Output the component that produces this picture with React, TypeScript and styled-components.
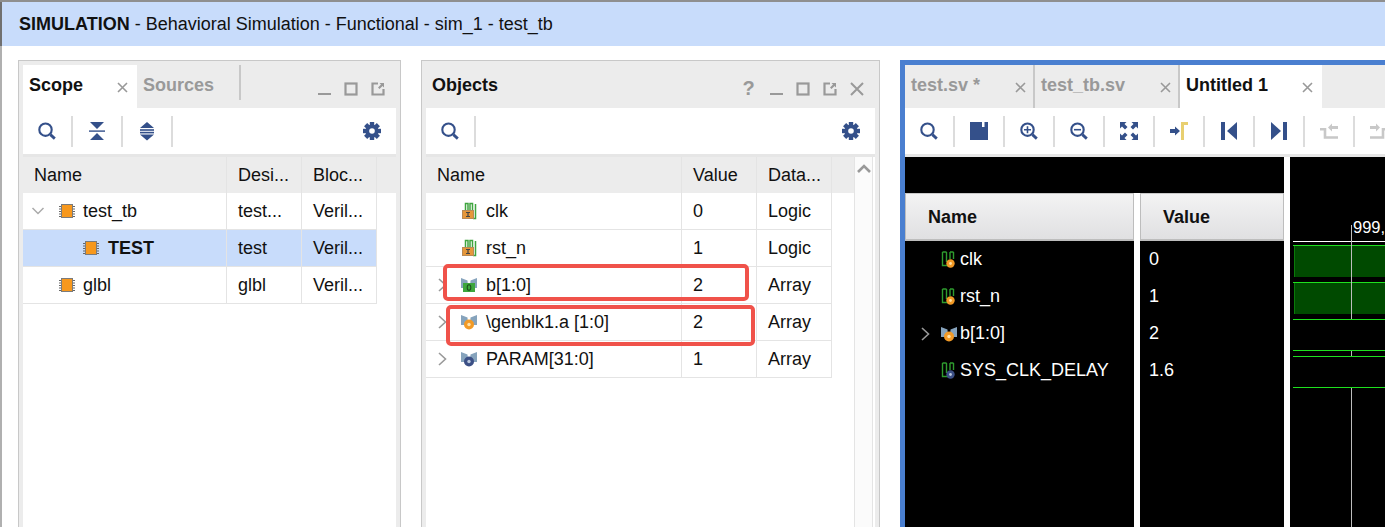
import React from "react";
import styled, { createGlobalStyle } from "styled-components";

const Global = createGlobalStyle`
  html, body { margin: 0; padding: 0; background: #fff; }
  body { font-family: "Liberation Sans", Arial, sans-serif; color: #111; }
`;

const BLUE = "#34508a";

const Page = styled.div`
  width: 1385px; height: 527px; overflow: hidden;
  display: flex; flex-direction: column;
  border-top: 2px solid #8f8f8f; box-sizing: border-box;
  background: #fff;
`;
const Banner = styled.div`
  height: 44px; flex: none; box-sizing: border-box;
  background: #c8dcfb; border-left: 2px solid #707070;
  padding-left: 17px; display: flex; align-items: center;
  font-size: 18px; white-space: pre;
  strong { font-weight: 700; }
`;
const Workspace = styled.div`
  flex: 1; min-height: 0; display: flex; gap: 20px;
  border-left: 2px solid #b0b0b0;
  padding: 14px 0 0 16px;
`;
const Panel = styled.section<{ $w: number }>`
  position: relative; flex: none; width: ${p => p.$w}px; box-sizing: border-box;
  border: 1px solid #c8c8c8; border-bottom: 0;
  background: #ececec; padding: 4px 4px 0;
  display: flex; flex-direction: column; overflow: hidden;
`;
const EditorPanel = styled.section`
  flex: 1; min-width: 0; border-top: 5px solid #4a7fd0; border-left: 5px solid #4a7fd0;
  background: #ececec; display: flex; flex-direction: column; overflow: hidden;
`;
const TabBar = styled.div`
  height: 43px; flex: none; display: flex; align-items: stretch; background: #ececec;
`;
const Tab = styled.div<{ $w: number; $active?: boolean; $sep?: boolean }>`
  width: ${p => p.$w}px; flex: none; box-sizing: border-box;
  display: flex; align-items: center; justify-content: space-between;
  padding: 0 ${p => (p.$sep ? 7 : 9)}px 3px 6px;
  background: ${p => (p.$active ? "#fff" : "transparent")};
  color: ${p => (p.$active ? "#111" : "#999")};
  font-weight: 700; font-size: 18px;
  border-right: ${p => (p.$sep ? "2px solid #c8c8c8" : "0")};
`;
const TabClose = styled.span`
  display: block; margin-top: 4px;
`;
const SourcesTab = styled(Tab)`
  height: 35px; padding: 5px 0 0 6px; border-right: 2px solid #c8c8c8;
`;
const PanelTitle = styled.div`
  font-weight: 700; font-size: 18px; padding: 0 0 3px 6px; align-self: center; color: #111;
`;
const WinButtons = styled.div`
  margin-left: auto; display: flex; padding: 4px 5px 0 0; height: 39px; align-items: center;
`;
const WinButton = styled.div`
  width: 27px; height: 20px; display: flex; align-items: center; justify-content: center;
  color: #999; font-weight: 700; font-size: 20px;
`;
const Toolbar = styled.div`
  height: 46px; flex: none; background: #fff; display: flex; align-items: center;
`;
const ToolButton = styled.div<{ $end?: boolean }>`
  width: 48px; height: 32px; flex: none; display: flex; align-items: center; justify-content: center;
  margin-left: ${p => (p.$end ? "auto" : "0")};
`;
const ToolSep = styled.div`
  width: 2px; height: 31px; flex: none; background: #dcdcdc;
`;
const Strip = styled.div`
  height: 3px; flex: none; background: #e6e6e6;
`;
const Content = styled.div`
  flex: 1; min-height: 0; background: #fff; display: flex;
`;
const TableArea = styled.div`
  flex: 1; min-width: 0;
`;
const HeadRow = styled.div`
  height: 36px; background: #ececec; display: flex; font-size: 18px;
`;
const Row = styled.div<{ $selected?: boolean }>`
  height: 37px; display: flex; font-size: 18px; width: max-content;
  background: ${p => (p.$selected ? "#c8dcfb" : "#fff")};
  box-sizing: border-box; border-bottom: 1px solid #e4e4e4;
`;
const Cell = styled.div<{ $w: number; $pad?: number }>`
  width: ${p => p.$w}px; flex: none; box-sizing: border-box;
  padding-left: ${p => p.$pad ?? 11}px;
  display: flex; align-items: center;
  border-right: 1px solid #e4e4e4; white-space: nowrap; overflow: hidden;
`;
const TreeSlot = styled.div<{ $x: number }>`
  width: ${p => p.$x}px; flex: none; display: flex; align-items: center;
`;
const Label = styled.span<{ $bold?: boolean; $gap?: number }>`
  font-weight: ${p => (p.$bold ? 700 : 400)}; margin-left: ${p => p.$gap ?? (p.$bold ? 9 : 8)}px;
`;
const Scroll = styled.div`
  width: 19px; flex: none; margin-right: 2px; box-sizing: border-box;
  border-left: 1px solid #e4e4e4; border-right: 1px solid #e4e4e4;
  background: #fbfbfb; display: flex; justify-content: center; padding-top: 4px; height: 400px;
`;
const Callout = styled.div<{ $top: number; $left: number; $w: number; $h: number }>`
  position: absolute; box-sizing: border-box;
  top: ${p => p.$top}px; left: ${p => p.$left}px; width: ${p => p.$w}px; height: ${p => p.$h}px;
  border: 4px solid #f0524a; border-radius: 5px;
`;

/* Waveform viewer */
const Viewer = styled.div`
  flex: 1; min-height: 0; display: flex; gap: 6px; background: #fff;
`;
const SignalPane = styled.div`
  width: 379px; flex: none; display: flex; flex-direction: column;
`;
const BlackBar = styled.div`
  height: 36px; flex: none; background: #000;
`;
const SignalCols = styled.div`
  flex: 1; display: flex; gap: 6px; min-height: 0;
`;
const SignalCol = styled.div<{ $w: number }>`
  width: ${p => p.$w}px; flex: none; background: #000; color: #fff;
`;
const SignalHead = styled.div<{ $pad: number }>`
  height: 48px; box-sizing: border-box; color: #111; font-weight: 700; font-size: 18px;
  background: linear-gradient(#f3f3f3, #e0e0e2);
  border: 1px solid #bdbdbd; border-top-color: #c8c8c8; border-bottom-width: 2px;
  display: flex; align-items: center; padding: 1px 0 0 ${p => p.$pad}px;
`;
const SignalRow = styled.div`
  height: 37px; display: flex; align-items: center; font-size: 18px; white-space: nowrap;
`;
const ValueRow = styled(SignalRow)`
  padding-left: 9px;
`;
const WavePane = styled.div`
  flex: 1; min-width: 0; background: #000;
`;
const Drawing = styled.svg`
  display: block; flex: none;
`;

const S = (p: React.PropsWithChildren<{ size?: number }>) => (
  <Drawing width={p.size ?? 20} height={p.size ?? 20} viewBox={`0 0 ${p.size ?? 20} ${p.size ?? 20}`}>
    {p.children}
  </Drawing>
);

const Lens = ({ children }: React.PropsWithChildren) => (
  <S>
    <circle cx="8.5" cy="8.7" r="6.2" fill="none" stroke={BLUE} strokeWidth="2.1" />
    <path d="M13.4 13.6L17.8 17.6" stroke={BLUE} strokeWidth="2.8" />
    {children}
  </S>
);
const SearchIcon = () => <Lens />;
const ZoomInIcon = () => (
  <Lens>
    <path d="M8.5 5.2V12.2M5 8.7H12" stroke={BLUE} strokeWidth="1.6" />
  </Lens>
);
const ZoomOutIcon = () => (
  <Lens>
    <path d="M5 8.7H12" stroke={BLUE} strokeWidth="1.6" />
  </Lens>
);
const CollapseIcon = () => (
  <S>
    <path d="M3 1H17L10 8Z M3 19H17L10 12Z" fill={BLUE} />
    <rect x="2" y="9.4" width="16" height="1.4" fill={BLUE} />
  </S>
);
const ExpandIcon = () => (
  <S>
    <path d="M10 1L17 7H3Z M3 13.5H17L10 19.5Z" fill={BLUE} />
    <rect x="3" y="8.2" width="14" height="1.6" fill={BLUE} />
    <rect x="3" y="10.8" width="14" height="1.6" fill={BLUE} />
  </S>
);
const GearIcon = () => (
  <S>
    <g fill={BLUE}>
      {[0, 45, 90, 135, 180, 225, 270, 315].map(a => (
        <rect key={a} x="7.8" y="1" width="4.4" height="5" transform={`rotate(${a} 10 10)`} />
      ))}
      <circle cx="10" cy="10" r="6.6" />
    </g>
    <circle cx="10" cy="10" r="2.8" fill="#fff" />
  </S>
);
const SaveIcon = () => (
  <S>
    <path fillRule="evenodd" d="M1 1H19V19H1Z M13 1V6H15.5V1Z" fill={BLUE} />
  </S>
);
const FitIcon = () => (
  <S>
    <g fill={BLUE}>
      {[0, 90, 180, 270].map(a => (
        <path key={a} d="M1 1H7.5L5.5 3L8.5 6L6 8.5L3 5.5L1 7.5Z" transform={`rotate(${a} 10 10)`} />
      ))}
    </g>
  </S>
);
const MarkerIcon = () => (
  <S>
    <path d="M1 8H6V5.5L11 10L6 14.5V12H1Z" fill={BLUE} />
    <path d="M12 1H19V4H15V19H12Z" fill="#e8cf70" />
  </S>
);
const PrevIcon = () => (
  <S>
    <rect x="2" y="1" width="4" height="18" fill={BLUE} />
    <path d="M18 1V19L8 10Z" fill={BLUE} />
  </S>
);
const NextIcon = () => (
  <S>
    <rect x="14" y="1" width="4" height="18" fill={BLUE} />
    <path d="M2 1V19L12 10Z" fill={BLUE} />
  </S>
);
const StepBackIcon = () => (
  <S>
    <path d="M1 8.2H6V16.5H19" fill="none" stroke="#c8c8c8" strokeWidth="2.6" />
    <path d="M19 5H13V2.5L9 6.5L13 10.5V8H19Z" fill="#c8c8c8" />
  </S>
);
const StepFwdIcon = () => (
  <S>
    <path d="M1 16.5H14V8.2H19" fill="none" stroke="#c8c8c8" strokeWidth="2.6" />
    <path d="M1 5H7V2.5L11 6.5L7 10.5V8H1Z" fill="#c8c8c8" />
  </S>
);
const CloseIcon = ({ size = 11, w = 1.6 }: { size?: number; w?: number }) => (
  <S size={size}>
    <path d={`M1 1L${size - 1} ${size - 1}M${size - 1} 1L1 ${size - 1}`} stroke="#999" strokeWidth={w} />
  </S>
);
const MinIcon = () => (
  <S size={14}>
    <rect x="1" y="11" width="13" height="2" fill="#999" />
  </S>
);
const MaxIcon = () => (
  <S size={14}>
    <rect x="1.5" y="1.5" width="11" height="11" fill="none" stroke="#999" strokeWidth="2.2" />
  </S>
);
const FloatIcon = () => (
  <S size={14}>
    <path d="M7 1.5H1.5V12.5H12.5V7" fill="none" stroke="#999" strokeWidth="2.2" />
    <path d="M8.5 1H13V5.5L11.5 4L8.5 7L7 5.5L10 2.5Z" fill="#999" />
  </S>
);
const ChevronDown = () => (
  <S size={14}>
    <path d="M1.5 4L7 9.5L12.5 4" fill="none" stroke="#aaa" strokeWidth="1.5" />
  </S>
);
const ChevronRight = () => (
  <S size={14}>
    <path d="M4 1L10.5 7L4 13" fill="none" stroke="#999" strokeWidth="1.6" />
  </S>
);
const ChevronUp = () => (
  <S size={16}>
    <path d="M2 11L8 5L14 11" fill="none" stroke="#999" strokeWidth="2.6" />
  </S>
);
const ChipIcon = () => (
  <S size={16}>
    <path d="M0 3.5H2.5M0 6H2.5M0 8.5H2.5M0 11H2.5M0 13.5H2.5M13.5 3.5H16M13.5 6H16M13.5 8.5H16M13.5 11H16M13.5 13.5H16" stroke="#666" strokeWidth="1.1" />
    <rect x="2.5" y="1.5" width="11" height="13" fill="#f7981d" stroke="#7b7b7b" />
  </S>
);

type Badge = "orange" | "navy" | "green";
const LogicObjIcon = () => (
  <S size={18}>
    <path d="M5.5 8V1.5H8V8M10 8V1.5H12.5V8M15.5 2V16.5H13" fill="none" stroke="#3fa53f" strokeWidth="1.5" />
    <rect x="2.5" y="8.5" width="11" height="8" fill="#e6973a" stroke="#b98a55" />
    <path d="M6 10.5H10M8 10.5V14.5M6 14.5H10" stroke="#444" strokeWidth="1.2" />
  </S>
);
const ArrayObjIcon = ({ badge }: { badge: Badge }) => (
  <S size={18}>
    <path d="M1 2L7.5 4.5L8 12H1Z M17 2L10.5 4.5L10 12H17Z" fill="#86a3bc" />
    {badge === "green" ? (
      <>
        <rect x="3" y="7" width="12" height="9" fill="#3da63d" />
        <ellipse cx="9" cy="11.5" rx="1.8" ry="2.8" fill="none" stroke="#1d4f1d" strokeWidth="1.1" />
      </>
    ) : (
      <>
        <circle cx="9" cy="11.5" r="5" fill={badge === "orange" ? "#f29a26" : "#3b4f85"} />
        <circle cx="9" cy="11.5" r="1.7" fill={badge === "orange" ? "#ffe2a8" : "#b9c6dd"} />
      </>
    )}
  </S>
);
const LogicSigIcon = ({ navy }: { navy?: boolean }) => (
  <S size={18}>
    <path d="M2.5 1V14.5H8M6.5 1V11M10 1V8M13.5 1V8M10 1H13.5M2.5 1H6.5" fill="none" stroke="#2e9c2e" strokeWidth="1.4" />
    <circle cx="10.5" cy="12.5" r="4.2" fill={navy ? "#3b4f85" : "#f29a26"} />
    <circle cx="10.5" cy="12.5" r="1.4" fill={navy ? "#b9c6dd" : "#ffe2a8"} />
  </S>
);

const TOOLS_VIEW: React.ComponentType[] = [
  SearchIcon, SaveIcon, ZoomInIcon, ZoomOutIcon, FitIcon, MarkerIcon, PrevIcon, NextIcon, StepBackIcon, StepFwdIcon,
];

const scopeRows = [
  { name: "test_tb", depth: 0, open: true, design: "test...", block: "Veril..." },
  { name: "TEST", depth: 1, design: "test", block: "Veril...", selected: true },
  { name: "glbl", depth: 0, design: "glbl", block: "Veril..." },
];

const objectRows: { name: string; value: string; type: string; icon: React.ReactNode; more?: boolean }[] = [
  { name: "clk", value: "0", type: "Logic", icon: <LogicObjIcon /> },
  { name: "rst_n", value: "1", type: "Logic", icon: <LogicObjIcon /> },
  { name: "b[1:0]", value: "2", type: "Array", icon: <ArrayObjIcon badge="green" />, more: true },
  { name: "\\genblk1.a [1:0]", value: "2", type: "Array", icon: <ArrayObjIcon badge="orange" />, more: true },
  { name: "PARAM[31:0]", value: "1", type: "Array", icon: <ArrayObjIcon badge="navy" />, more: true },
];

const signalRows: { name: string; value: string; icon: React.ReactNode; more?: boolean }[] = [
  { name: "clk", value: "0", icon: <LogicSigIcon /> },
  { name: "rst_n", value: "1", icon: <LogicSigIcon /> },
  { name: "b[1:0]", value: "2", icon: <ArrayObjIcon badge="orange" />, more: true },
  { name: "SYS_CLK_DELAY", value: "1.6", icon: <LogicSigIcon navy /> },
];

const Waveform = () => (
  <Drawing width="95" height="370" viewBox="1290 157 95 370">
    <g shapeRendering="crispEdges">
      <rect x="1294" y="246" width="91" height="31" fill="#004a00" />
      <rect x="1294" y="283" width="91" height="31" fill="#004a00" />
      <path d="M1294.5 246V277M1294.5 283V314" stroke="#0a7a0a" />
      <path d="M1293 241.5H1385" stroke="#fff" />
      <path d="M1293 245.5H1385M1293 282.5H1385M1293 319.5H1385M1293 350.5H1385M1293 356.5H1385M1293 387.5H1385" stroke="#1fe01f" />
      <path d="M1351.5 225V319M1351.5 351V356M1351.5 388V527" stroke="#bdbdbd" />
    </g>
    <text x="1353" y="233" fill="#fff" fontFamily="Liberation Sans" fontSize="16.5">999,</text>
  </Drawing>
);

export default function App() {
  return (
    <>
      <Global />
      <Page>
        <Banner>
          <strong>SIMULATION</strong> - Behavioral Simulation - Functional - sim_1 - test_tb
        </Banner>
        <Workspace>
          <Panel $w={383}>
            <TabBar>
              <Tab $w={114} $active>Scope<TabClose><CloseIcon /></TabClose></Tab>
              <SourcesTab $w={104}>Sources</SourcesTab>
              <WinButtons>
                <WinButton><MinIcon /></WinButton>
                <WinButton><MaxIcon /></WinButton>
                <WinButton><FloatIcon /></WinButton>
              </WinButtons>
            </TabBar>
            <Toolbar>
              <ToolButton><SearchIcon /></ToolButton><ToolSep />
              <ToolButton><CollapseIcon /></ToolButton><ToolSep />
              <ToolButton><ExpandIcon /></ToolButton><ToolSep />
              <ToolButton $end><GearIcon /></ToolButton>
            </Toolbar>
            <Strip />
            <Content>
              <TableArea>
                <HeadRow>
                  <Cell $w={204}>Name</Cell>
                  <Cell $w={75}>Desi...</Cell>
                  <Cell $w={75}>Bloc...</Cell>
                </HeadRow>
                {scopeRows.map(r => (
                  <Row key={r.name} $selected={r.selected}>
                    <Cell $w={204} $pad={0}>
                      <TreeSlot $x={r.depth ? 60 : 36}>
                        {r.open && <><TreeSlot $x={8} /><ChevronDown /></>}
                      </TreeSlot>
                      <ChipIcon />
                      <Label $bold={r.selected}>{r.name}</Label>
                    </Cell>
                    <Cell $w={75}>{r.design}</Cell>
                    <Cell $w={75}>{r.block}</Cell>
                  </Row>
                ))}
              </TableArea>
            </Content>
          </Panel>

          <Panel $w={459}>
            <TabBar>
              <PanelTitle>Objects</PanelTitle>
              <WinButtons>
                <WinButton>?</WinButton>
                <WinButton><MinIcon /></WinButton>
                <WinButton><MaxIcon /></WinButton>
                <WinButton><FloatIcon /></WinButton>
                <WinButton><CloseIcon size={14} w={2} /></WinButton>
              </WinButtons>
            </TabBar>
            <Toolbar>
              <ToolButton><SearchIcon /></ToolButton><ToolSep />
              <ToolButton $end><GearIcon /></ToolButton>
            </Toolbar>
            <Strip />
            <Content>
              <TableArea>
                <HeadRow>
                  <Cell $w={256}>Name</Cell>
                  <Cell $w={75}>Value</Cell>
                  <Cell $w={75}>Data...</Cell>
                </HeadRow>
                {objectRows.map(r => (
                  <Row key={r.name}>
                    <Cell $w={256} $pad={0}>
                      <TreeSlot $x={34}>
                        {r.more && <><TreeSlot $x={9} /><ChevronRight /></>}
                      </TreeSlot>
                      {r.icon}
                      <Label>{r.name}</Label>
                    </Cell>
                    <Cell $w={75}>{r.value}</Cell>
                    <Cell $w={75}>{r.type}</Cell>
                  </Row>
                ))}
              </TableArea>
              <Scroll><ChevronUp /></Scroll>
            </Content>
            <Callout $top={203} $left={21} $w={306} $h={37} />
            <Callout $top={244} $left={24} $w={309} $h={41} />
          </Panel>

          <EditorPanel>
            <TabBar>
              <Tab $w={130} $sep>test.sv *<TabClose><CloseIcon /></TabClose></Tab>
              <Tab $w={145} $sep>test_tb.sv<TabClose><CloseIcon /></TabClose></Tab>
              <Tab $w={142} $active>Untitled 1<TabClose><CloseIcon /></TabClose></Tab>
            </TabBar>
            <Toolbar>
              {TOOLS_VIEW.map((Icon, i) => (
                <React.Fragment key={i}>
                  <ToolButton><Icon /></ToolButton>
                  <ToolSep />
                </React.Fragment>
              ))}
            </Toolbar>
            <Strip />
            <Viewer>
              <SignalPane>
                <BlackBar />
                <SignalCols>
                  <SignalCol $w={229}>
                    <SignalHead $pad={22}>Name</SignalHead>
                    {signalRows.map(r => (
                      <SignalRow key={r.name}>
                        <TreeSlot $x={35}>
                          {r.more && <><TreeSlot $x={13} /><ChevronRight /></>}
                        </TreeSlot>
                        {r.icon}
                        <Label $gap={2}>{r.name}</Label>
                      </SignalRow>
                    ))}
                  </SignalCol>
                  <SignalCol $w={144}>
                    <SignalHead $pad={22}>Value</SignalHead>
                    {signalRows.map(r => (
                      <ValueRow key={r.name}>{r.value}</ValueRow>
                    ))}
                  </SignalCol>
                </SignalCols>
              </SignalPane>
              <WavePane><Waveform /></WavePane>
            </Viewer>
          </EditorPanel>
        </Workspace>
      </Page>
    </>
  );
}
